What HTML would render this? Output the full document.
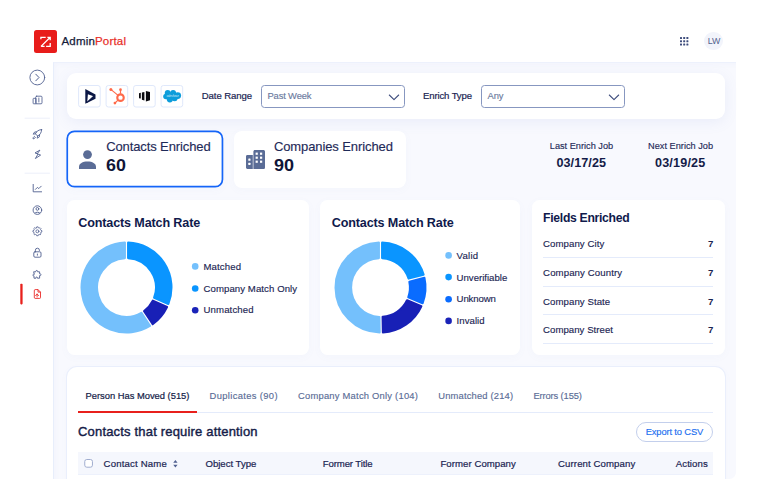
<!DOCTYPE html>
<html lang="en">
<head>
<meta charset="utf-8">
<title>AdminPortal</title>
<style>
*{box-sizing:border-box;margin:0;padding:0}
html,body{width:757px;height:500px;overflow:hidden;background:#fff}
body{position:relative;font-family:"Liberation Sans","DejaVu Sans",sans-serif;color:#1a2452;-webkit-font-smoothing:antialiased}
.abs{position:absolute}
.t{position:absolute;white-space:nowrap;line-height:1;-webkit-text-stroke:.14px currentColor}
.t[style*="bold"]{-webkit-text-stroke:0}
#main{position:absolute;left:53px;top:62px;width:683px;height:418px;background:#f8f9fe;border-radius:0 0 7px 0;overflow:hidden;border-left:1px solid #e8eefb;border-top:1px solid #edf1fc;box-shadow:inset 3px 3px 5px -2px rgba(120,140,210,.05)}
.card{position:absolute;background:#fff;border-radius:7.5px;box-shadow:0 2px 8px rgba(110,130,205,.035)}
.ib{position:absolute;top:85px;width:23px;height:22.600px;border:1px solid #dfe8fb;border-radius:2.500px;background:#fff}
.sel{position:absolute;top:85px;height:22.5px;width:144px;border:1px solid #8797c0;border-radius:3.5px;background:#fff}
.lg{position:absolute;width:6.5px;height:6.5px;border-radius:50%}
.hr{position:absolute;height:1px;background:#e4ebfb}
#brand{left:61.5px;letter-spacing:0.18px}
#l_dr{left:201.8px;letter-spacing:-0.11px}
#s_pw{left:267.5px;letter-spacing:-0.15px}
#l_et{left:423.1px;letter-spacing:-0.15px}
#s_any{left:487.5px;letter-spacing:-0.10px}
#st1{left:106.2px;letter-spacing:-0.11px}
#st2{left:273.9px;letter-spacing:-0.10px}
#j1{left:549.8px;letter-spacing:0.00px}
#j1v{left:556.4px;letter-spacing:0.08px}
#j2{left:648.1px;letter-spacing:0.01px}
#j2v{left:655.0px;letter-spacing:0.18px}
#c1t{left:78.3px;letter-spacing:-0.14px}
#g11{left:203.1px;letter-spacing:0.12px}
#g12{left:203.1px;letter-spacing:0.08px}
#g13{left:203.1px;letter-spacing:0.13px}
#c2t{left:331.8px;letter-spacing:-0.14px}
#g21{left:456.6px;letter-spacing:0.24px}
#g22{left:456.6px;letter-spacing:0.00px}
#g23{left:456.6px;letter-spacing:-0.12px}
#g24{left:456.6px;letter-spacing:0.04px}
#fet{left:543.1px;letter-spacing:-0.30px}
#f1{left:543.1px;letter-spacing:0.08px}
#f2{left:543.1px;letter-spacing:0.12px}
#f3{left:543.1px;letter-spacing:0.08px}
#f4{left:543.1px;letter-spacing:0.04px}
#tb1{left:85.6px;letter-spacing:-0.02px}
#tb2{left:209.6px;letter-spacing:0.35px}
#tb3{left:298.0px;letter-spacing:0.23px}
#tb4{left:438.2px;letter-spacing:0.18px}
#tb5{left:533.4px;letter-spacing:-0.13px}
#ttl{left:78.0px;letter-spacing:0.18px}
#exp{left:645.7px;letter-spacing:-0.15px}
#h1{left:103.6px;letter-spacing:0.17px}
#h2{left:205.5px;letter-spacing:-0.02px}
#h3{left:322.7px;letter-spacing:-0.11px}
#h4{left:440.4px;letter-spacing:0.06px}
#h5{left:558.1px;letter-spacing:0.10px}
#h6{left:675.8px;letter-spacing:0.07px}
</style>
</head>
<body>

<!-- header -->
<div class="abs" style="left:34.2px;top:29.5px;width:23.2px;height:23.2px;background:#e81c1a;border-radius:2.5px">
<svg width="23" height="23" viewBox="0 0 23 23" style="display:block"><path d="M6.9 9.2V7.300h4.800M13.400 7.300h2.800v2.900M16 7.500L7 16.400M6.900 16.300h3.700M12.100 16.300h4.100v-3.300" fill="none" stroke="#fff" stroke-width="1.300"/></svg>
</div>
<div class="t" id="brand" style="left:61.5px;top:35.5px;font-size:11.5px;color:#141a38;-webkit-text-stroke:.25px currentColor"><span>Admin</span><span style="color:#e8302a">Portal</span></div>

<svg class="abs" style="left:680px;top:37px" width="9" height="9" viewBox="0 0 9 9" fill="#3d4c7c">
<rect x="0" y="0" width="2" height="2" rx=".5"/><rect x="3.2" y="0" width="2" height="2" rx=".5"/><rect x="6.4" y="0" width="2" height="2" rx=".5"/>
<rect x="0" y="3.2" width="2" height="2" rx=".5"/><rect x="3.2" y="3.2" width="2" height="2" rx=".5"/><rect x="6.4" y="3.2" width="2" height="2" rx=".5"/>
<rect x="0" y="6.4" width="2" height="2" rx=".5"/><rect x="3.2" y="6.4" width="2" height="2" rx=".5"/><rect x="6.4" y="6.4" width="2" height="2" rx=".5"/>
</svg>
<div class="abs" style="left:704px;top:31.5px;width:18.6px;height:18.6px;border-radius:50%;background:#f2f4fb"></div>
<div class="t" style="left:707.8px;top:36.6px;font-size:8.8px;color:#52638e;-webkit-text-stroke:0">LW</div>

<!-- sidebar -->
<svg class="abs" style="left:20px;top:62px" width="33" height="250" viewBox="20 62 33 250" fill="none" stroke="#506090" stroke-width="1" stroke-linecap="round" stroke-linejoin="round">
<circle cx="37.3" cy="77.5" r="7.4" stroke-width=".9"/>
<path d="M35.8 74.2l3.2 3.3-3.2 3.3" stroke-width="1"/>
<!-- buildings -->
<path d="M35.700 98.300h-1.900a.7.700 0 0 0-.700.700v4.100a.7.700 0 0 0 .700.700h1.900zM36.700 96.200h4.300a1 1 0 0 1 1 1v5.600a1 1 0 0 1-1 1h-4.300a1 1 0 0 1-1-1v-5.600a1 1 0 0 1 1-1zM38.850 98v4" stroke-width=".85"/>
<path d="M25 118.2h24.5M25 173.2h24.5" stroke="#eceffa" stroke-width="1"/>
<!-- rocket -->
<path d="M41.6 129.6c-2.8 0-5 1.6-6.2 4.2l2.2 2.2c2.6-1.200 4-3.600 4-6.400zM35.400 133.800l-2.200.4 1.400-2.200 2-.2M37.600 136l-.4 2.200 2.200-1.400.2-2M34.400 136.400c-.8.200-1.400 1.200-1.400 2.400 1.200 0 2.200-.6 2.400-1.400" stroke-width=".9"/>
<!-- bolt -->
<path d="M39.600 150.300l-4.600 2.600 3 1.200-2.600 4.400 5.200-3.400-3-1.200z" stroke-width=".9"/>
<!-- chart -->
<path d="M33.200 184.400v7.400h8.400M35.400 189.400l2-2 1.400 1.200 2.400-2.400" stroke-width=".9"/>
<!-- user -->
<circle cx="37.400" cy="210.100" r="4.300" stroke-width=".9"/><circle cx="37.400" cy="208.900" r="1.400" stroke-width=".9"/><path d="M34.800 213.200c.6-1.400 4.600-1.400 5.200 0" stroke-width=".9"/>
<!-- gear -->
<path d="M36.49 227.76L36.70 226.86L38.10 226.86L38.31 227.76L39.26 228.16L40.05 227.66L41.04 228.65L40.54 229.44L40.94 230.39L41.84 230.60L41.84 232.00L40.94 232.21L40.54 233.16L41.04 233.95L40.05 234.94L39.26 234.44L38.31 234.84L38.10 235.74L36.70 235.74L36.49 234.84L35.54 234.44L34.75 234.94L33.76 233.95L34.26 233.16L33.86 232.21L32.96 232.00L32.96 230.60L33.86 230.39L34.26 229.44L33.76 228.65L34.75 227.66L35.54 228.16Z" stroke-width=".8"/><circle cx="37.400" cy="231.300" r="1.500" stroke-width=".8"/>
<!-- lock -->
<rect x="33.800" y="251.800" width="7.200" height="5.400" rx="1.200" stroke-width=".9"/><path d="M35.400 251.800v-1.600a2 2 0 0 1 4 0v.4M37.400 254v1.200" stroke-width=".9"/>
<!-- puzzle -->
<path d="M34 271.800h1.800c-.6-1.800 2.400-1.800 1.800 0h2v2c1.800-.6 1.800 2.400 0 1.800v2.600h-2.200c.4-1.600-1.800-1.600-1.400 0h-2v-2.400c-1.600.4-1.600-2 0-1.600z" stroke-width=".9"/>
<!-- file -->
<path d="M34.300 290.400a.8.800 0 0 1 .800-.800h2.900l2.500 2.500v5.500a.8.800 0 0 1-.800.800h-4.600a.8.800 0 0 1-.800-.800zM38 289.800v2.300h2.300" stroke="#e8201c" stroke-width=".85"/><path d="M35.600 295.700l1.500-1.800 1.500 1.800M37.100 294.100v2.900" stroke="#e8201c" stroke-width=".8"/>
</svg>
<svg class="abs" style="left:18px;top:282px" width="8" height="25" viewBox="18 282 8 25"><rect x="20.300" y="283.800" width="2.300" height="20.600" rx=".8" fill="#e8201c"/></svg>

<!-- content -->
<div id="main"></div>

<!-- filter card -->
<div class="card" style="left:66.5px;top:73.300px;width:658px;height:45.600px;border-radius:9px;box-shadow:0 3px 14px rgba(110,130,205,.10)"></div>
<svg class="abs" style="left:70px;top:80px" width="120" height="32" viewBox="70 80 120 32">
<rect x="78.60" y="85.500" width="21.600" height="21.500" rx="2.300" fill="#fff" stroke="#dfe8fb" stroke-width="1"/>
<rect x="106.10" y="85.500" width="21.600" height="21.500" rx="2.300" fill="#fff" stroke="#dfe8fb" stroke-width="1"/>
<rect x="133.60" y="85.500" width="21.600" height="21.500" rx="2.300" fill="#fff" stroke="#dfe8fb" stroke-width="1"/>
<rect x="161.10" y="85.500" width="21.600" height="21.500" rx="2.300" fill="#fff" stroke="#dfe8fb" stroke-width="1"/>
<g transform="translate(79.20 86.050)"><path d="M6.100 2.900L16.300 8.400V12.600L6.100 17.700ZM8.700 8.100L8.100 15.800L14.300 10.300Z" fill="#0b1744" fill-rule="evenodd"/><path d="M14.600 10.100L8 16.300" stroke="#0b1744" stroke-width="1.100"/></g>
<g transform="translate(106.70 86.050)"><g fill="none" stroke="#ff6a4a"><circle cx="13.800" cy="11.600" r="3.250" stroke-width="2.100"/><path d="M13.800 7.600V3.800M11.400 9.300L4.400 3.600M11.300 14.100L8.300 16.900" stroke-width="1.200"/><g fill="#ff6a4a" stroke="none"><circle cx="13.800" cy="3.600" r="1.350"/><circle cx="4.200" cy="3.450" r="1.500"/><circle cx="8.200" cy="17.050" r="1.350"/></g></g></g>
<g transform="translate(134.20 86.050)"><g fill="#0b0b10"><path d="M4.800 7.100l1.800-.300v5.600l-1.800-.300z"/><path d="M7.700 6.500l2.500-.500v8.400l-2.500-.600z"/><path d="M11.700 5l4.100.900v8.200l-4.100 1.300z"/></g></g>
<g transform="translate(161.65 86.050)"><g fill="#0d9ddb"><circle cx="6.050" cy="6.900" r="2.950"/><circle cx="11.500" cy="6.800" r="2.900"/><circle cx="16.100" cy="9.500" r="3.350"/><circle cx="4.300" cy="10.500" r="2.750"/><circle cx="8.200" cy="13.300" r="3.100"/><circle cx="12.950" cy="12.300" r="3"/><ellipse cx="10.300" cy="10" rx="6.500" ry="4"/></g><text x="10.900" y="10.600" font-size="2.700" fill="#fff" fill-opacity=".92" text-anchor="middle" font-family="Liberation Sans, sans-serif" font-style="italic">salesforce</text></g>
</svg>

<div class="t" id="l_dr" style="left:201.800px;top:90.800px;font-size:9.600px;color:#1a2452;-webkit-text-stroke:.190px currentColor">Date Range</div>
<div class="sel" style="left:261px"></div>
<div class="t" id="s_pw" style="left:267.500px;top:91.300px;font-size:9.400px;color:#6b7a9e">Past Week</div>
<svg class="abs" style="left:388px;top:92.500px" width="12" height="9" viewBox="0 0 12 9" fill="none" stroke="#3d4c7c" stroke-width="1.050" stroke-linecap="round" stroke-linejoin="round"><path d="M1.300 2l4.700 4.600 4.700-4.600"/></svg>
<div class="t" id="l_et" style="left:423px;top:90.800px;font-size:9.600px;color:#1a2452;-webkit-text-stroke:.190px currentColor">Enrich Type</div>
<div class="sel" style="left:481px"></div>
<div class="t" id="s_any" style="left:487.500px;top:91.300px;font-size:9.400px;color:#6b7a9e">Any</div>
<svg class="abs" style="left:608px;top:92.500px" width="12" height="9" viewBox="0 0 12 9" fill="none" stroke="#3d4c7c" stroke-width="1.050" stroke-linecap="round" stroke-linejoin="round"><path d="M1.300 2l4.700 4.600 4.700-4.600"/></svg>

<!-- stat cards -->
<div class="card" style="left:66.500px;top:130.500px;width:156.700px;height:57px;border-radius:8px"></div>
<svg class="abs" style="left:60px;top:125px" width="170" height="70" viewBox="60 125 170 70"><rect x="67.250" y="131.350" width="155.200" height="55.300" rx="7.200" fill="none" stroke="#1565f8" stroke-width="1.700"/></svg>
<svg class="abs" style="left:79px;top:150px" width="17" height="19" viewBox="0 0 17 19" fill="#5a6c96"><circle cx="8.500" cy="4.600" r="4.400"/><path d="M0 19v-2.200c0-3.400 3.600-5.400 8.500-5.400s8.500 2 8.500 5.400v2.200z"/></svg>
<div class="t" id="st1" style="left:106.200px;top:139.600px;font-size:13px;color:#1e2a58">Contacts Enriched</div>
<div class="t" id="sv1" style="left:106.200px;top:158px;font-size:16px;font-weight:bold;color:#0f1538;transform:scaleX(1.115);transform-origin:0 50%">60</div>

<div class="card" style="left:234.200px;top:130.500px;width:172px;height:57px;border-radius:8px"></div>
<svg class="abs" style="left:246px;top:149.500px" width="19" height="19" viewBox="0 0 19 19" fill="#5a6c96"><path d="M0 6.400c0-.8.600-1.400 1.400-1.400h5.400v14h-5.400c-.800 0-1.400-.600-1.400-1.400zM7.400 1.600c0-.900.700-1.600 1.600-1.600h8.400c.900 0 1.600.700 1.600 1.600v15.800c0 .900-.700 1.600-1.600 1.600h-10z"/><g fill="#fff"><rect x="2.300" y="8.600" width="2.200" height="2.200" rx=".5"/><rect x="2.300" y="12.800" width="2.200" height="2.200" rx=".5"/><rect x="9.600" y="2.600" width="2.200" height="2.200"/><rect x="14" y="2.600" width="2.200" height="2.200"/><rect x="9.600" y="6.600" width="2.200" height="2.200"/><rect x="14" y="6.600" width="2.200" height="2.200"/><rect x="9.600" y="10.600" width="2.200" height="2.200"/><rect x="14" y="10.600" width="2.200" height="2.200"/></g></svg>
<div class="t" id="st2" style="left:273.900px;top:139.600px;font-size:13px;color:#1e2a58">Companies Enriched</div>
<div class="t" id="sv2" style="left:273.900px;top:158px;font-size:16px;font-weight:bold;color:#0f1538;transform:scaleX(1.125);transform-origin:0 50%">90</div>

<div class="t" id="j1" style="left:549.800px;top:141.800px;font-size:9.200px;color:#1e2a58">Last Enrich Job</div>
<div class="t" id="j1v" style="left:556.400px;top:157.100px;font-size:12.600px;font-weight:bold;color:#141c48">03/17/25</div>
<div class="t" id="j2" style="left:648.100px;top:141.800px;font-size:9.200px;color:#1e2a58">Next Enrich Job</div>
<div class="t" id="j2v" style="left:655px;top:157.100px;font-size:12.600px;font-weight:bold;color:#141c48">03/19/25</div>

<!-- chart 1 -->
<div class="card" style="left:66.500px;top:199.500px;width:242px;height:155.500px"></div>
<div class="t" id="c1t" style="left:78.200px;top:217.300px;font-size:12.600px;font-weight:bold;color:#101a4c">Contacts Match Rate</div>
<svg class="abs" id="d1" style="left:78.400px;top:238.700px" width="97" height="97" viewBox="-48.500 -48.500 97 97"><path d="M1.65 -44.87A44.90 44.90 0 0 1 41.81 16.38L27.67 10.23A29.50 29.50 0 0 0 1.65 -29.45Z" fill="#0a95ff" stroke="#0a95ff" stroke-width="2.2" stroke-linejoin="round"/><path d="M40.49 19.40A44.90 44.90 0 0 1 26.14 36.51L17.63 23.65A29.50 29.50 0 0 0 26.35 13.26Z" fill="#1820b6" stroke="#1820b6" stroke-width="2.2" stroke-linejoin="round"/><path d="M23.39 38.33A44.90 44.90 0 1 1 -1.65 -44.87L-1.65 -29.45A29.50 29.50 0 1 0 14.88 25.47Z" fill="#74c0fc" stroke="#74c0fc" stroke-width="2.2" stroke-linejoin="round"/></svg>
<div class="t" id="g11" style="left:203.500px;top:261.500px;font-size:9.600px;color:#1a2452">Matched</div>
<div class="t" id="g12" style="left:203.500px;top:283.500px;font-size:9.600px;color:#1a2452">Company Match Only</div>
<div class="t" id="g13" style="left:203.500px;top:305.200px;font-size:9.600px;color:#1a2452">Unmatched</div>

<!-- chart 2 -->
<div class="card" style="left:320px;top:199.500px;width:200px;height:155.500px"></div>
<div class="t" id="c2t" style="left:331.700px;top:217.300px;font-size:12.600px;font-weight:bold;color:#101a4c">Contacts Match Rate</div>
<svg class="abs" id="d2" style="left:331.900px;top:238.700px" width="97" height="97" viewBox="-48.500 -48.500 97 97"><path d="M1.65 -44.87A44.90 44.90 0 0 1 43.03 -12.83L28.10 -8.97A29.50 29.50 0 0 0 1.65 -29.45Z" fill="#0a95ff" stroke="#0a95ff" stroke-width="2.2" stroke-linejoin="round"/><path d="M43.85 -9.64A44.90 44.90 0 0 1 42.09 15.65L27.84 9.75A29.50 29.50 0 0 0 28.93 -5.78Z" fill="#0a6cff" stroke="#0a6cff" stroke-width="2.2" stroke-linejoin="round"/><path d="M40.82 18.70A44.90 44.90 0 0 1 2.43 44.83L2.16 29.42A29.50 29.50 0 0 0 26.58 12.80Z" fill="#1820b6" stroke="#1820b6" stroke-width="2.2" stroke-linejoin="round"/><path d="M-0.87 44.89A44.90 44.90 0 0 1 -1.65 -44.87L-1.65 -29.45A29.50 29.50 0 0 0 -1.14 29.48Z" fill="#74c0fc" stroke="#74c0fc" stroke-width="2.2" stroke-linejoin="round"/></svg>
<div class="t" id="g21" style="left:456.600px;top:250.700px;font-size:9.600px;color:#1a2452">Valid</div>
<div class="t" id="g22" style="left:456.600px;top:272.900px;font-size:9.600px;color:#1a2452">Unverifiable</div>
<div class="t" id="g23" style="left:456.600px;top:293.900px;font-size:9.600px;color:#1a2452">Unknown</div>
<div class="t" id="g24" style="left:456.600px;top:316.200px;font-size:9.600px;color:#1a2452">Invalid</div>

<svg class="abs" style="left:0;top:0" width="757" height="500" viewBox="0 0 757 500"><circle cx="195.2" cy="266.4" r="3.300" fill="#74c0fc"/><circle cx="195.2" cy="288.5" r="3.300" fill="#0a95ff"/><circle cx="195.2" cy="310.3" r="3.300" fill="#1a23b8"/><circle cx="448.6" cy="255.4" r="3.300" fill="#74c0fc"/><circle cx="448.6" cy="277.1" r="3.300" fill="#0a95ff"/><circle cx="448.6" cy="299.2" r="3.300" fill="#0a6cff"/><circle cx="448.6" cy="320.9" r="3.300" fill="#1a23b8"/></svg>
<!-- fields enriched -->
<div class="card" style="left:531.500px;top:199.500px;width:193.500px;height:155.500px"></div>
<div class="t" id="fet" style="left:543.100px;top:211.500px;font-size:12.200px;font-weight:bold;color:#101a4c">Fields Enriched</div>
<div class="t" id="f1" style="left:543.100px;top:239.200px;font-size:9.600px;color:#1a2452">Company City</div>
<div class="t" id="f2" style="left:543.100px;top:267.800px;font-size:9.600px;color:#1a2452">Company Country</div>
<div class="t" id="f3" style="left:543.100px;top:296.500px;font-size:9.600px;color:#1a2452">Company State</div>
<div class="t" id="f4" style="left:543.100px;top:325.200px;font-size:9.600px;color:#1a2452">Company Street</div>
<div class="t" style="left:708px;top:239.200px;font-size:9.600px;font-weight:bold;color:#1a2452">7</div>
<div class="t" style="left:708px;top:267.800px;font-size:9.600px;font-weight:bold;color:#1a2452">7</div>
<div class="t" style="left:708px;top:296.500px;font-size:9.600px;font-weight:bold;color:#1a2452">7</div>
<div class="t" style="left:708px;top:325.200px;font-size:9.600px;font-weight:bold;color:#1a2452">7</div>
<div class="hr" style="left:543px;width:170px;top:257px"></div>
<div class="hr" style="left:543px;width:170px;top:285.700px"></div>
<div class="hr" style="left:543px;width:170px;top:314.400px"></div>
<div class="hr" style="left:543px;width:170px;top:343px"></div>

<!-- table card -->
<div class="card" style="left:66.500px;top:367px;width:658px;height:130px;border-radius:10px 10px 0 0;box-shadow:0 0 0 1px #eaeffc,0 2px 8px rgba(110,130,205,.035)"></div>
<div class="hr" style="left:78px;width:635px;top:411.500px"></div>
<div class="abs" style="left:78px;top:410.500px;width:119px;height:2.200px;background:#e8201c"></div>
<div class="t" id="tb1" style="left:85.600px;top:391.200px;font-size:9.400px;color:#141c48;-webkit-text-stroke:.200px currentColor">Person Has Moved (515)</div>
<div class="t" id="tb2" style="left:209.600px;top:391.200px;font-size:9.400px;color:#5a6c96">Duplicates (90)</div>
<div class="t" id="tb3" style="left:298px;top:391.200px;font-size:9.400px;color:#5a6c96">Company Match Only (104)</div>
<div class="t" id="tb4" style="left:438.200px;top:391.200px;font-size:9.400px;color:#5a6c96">Unmatched (214)</div>
<div class="t" id="tb5" style="left:533.400px;top:391.200px;font-size:9.400px;color:#5a6c96">Errors (155)</div>
<div class="t" id="ttl" style="left:78px;top:425px;font-size:13px;color:#141c48;-webkit-text-stroke:.400px currentColor">Contacts that require attention</div>
<div class="abs" style="left:636px;top:422px;width:77px;height:20.200px;border:1px solid #c3cfec;border-radius:11px;background:#fff"></div>
<div class="t" id="exp" style="left:645.700px;top:426.900px;font-size:9.400px;color:#1a6ef0">Export to CSV</div>
<div class="abs" style="left:78px;top:452px;width:635px;height:23px;background:#f5f7fd;border-bottom:1px solid #edf1fc"></div>
<svg class="abs" style="left:83px;top:458px" width="12" height="12" viewBox="0 0 12 12"><rect x="1.750" y="1.500" width="7.700" height="7.700" rx="2" fill="#fff" stroke="#a0adcf" stroke-width="1"/></svg>
<div class="t" id="h1" style="left:103.600px;top:458.800px;font-size:9.600px;color:#1a2452;-webkit-text-stroke:.190px currentColor">Contact Name</div>
<svg class="abs" style="left:173px;top:460px" width="4.800" height="7.600" viewBox="0 0 5 8" fill="#506090"><path d="M2.500 0l2.300 3h-4.600zM2.500 8l2.300-3h-4.600z"/></svg>
<div class="t" id="h2" style="left:205.500px;top:458.800px;font-size:9.600px;color:#1a2452;-webkit-text-stroke:.190px currentColor">Object Type</div>
<div class="t" id="h3" style="left:322.700px;top:458.800px;font-size:9.600px;color:#1a2452;-webkit-text-stroke:.190px currentColor">Former Title</div>
<div class="t" id="h4" style="left:440.400px;top:458.800px;font-size:9.600px;color:#1a2452;-webkit-text-stroke:.190px currentColor">Former Company</div>
<div class="t" id="h5" style="left:558.100px;top:458.800px;font-size:9.600px;color:#1a2452;-webkit-text-stroke:.190px currentColor">Current Company</div>
<div class="t" id="h6" style="left:675.800px;top:458.800px;font-size:9.600px;color:#1a2452;-webkit-text-stroke:.190px currentColor">Actions</div>

<!-- bottom white mask -->
<svg class="abs" style="left:0;top:470px" width="757" height="30" viewBox="0 470 757 30"><path d="M0 479H729.500A6.500 6.500 0 0 0 736 472.500V470H757V500H0Z" fill="#fff"/></svg>
</body>
</html>
